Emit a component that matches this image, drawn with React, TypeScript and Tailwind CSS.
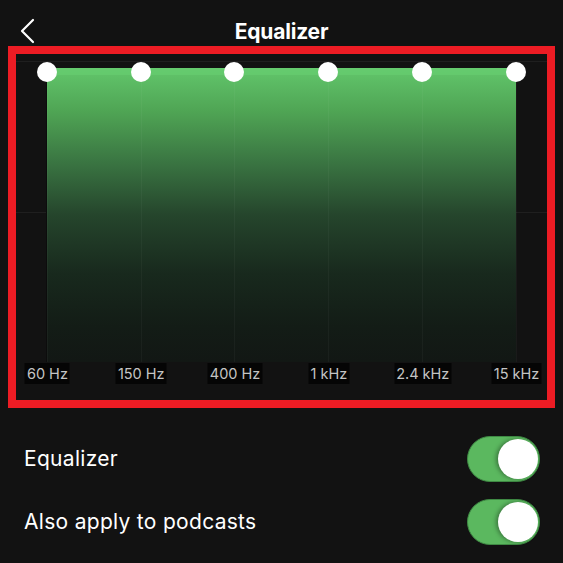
const bands = ["60 Hz", "150 Hz", "400 Hz", "1 kHz", "2.4 kHz", "15 kHz"];
const xs = [31, 125, 218, 312, 406, 500];

function Chart() {
  return (
    <svg width="531" height="308" viewBox="0 0 531 308" className="block">
      <defs>
        <linearGradient id="eqfill" x1="0" y1="0" x2="0" y2="1">
          <stop offset="0" stopColor="#62c66b" />
          <stop offset="0.15" stopColor="#4fa454" />
          <stop offset="0.32" stopColor="#3a7542" />
          <stop offset="0.5" stopColor="#25452c" />
          <stop offset="0.7" stopColor="#18291d" />
          <stop offset="0.88" stopColor="#131c16" />
          <stop offset="1" stopColor="#121714" />
        </linearGradient>
      </defs>
      <line x1="0" y1="7.5" x2="531" y2="7.5" stroke="#1f1f1f" strokeWidth="1" />
      <line x1="0" y1="158.5" x2="531" y2="158.5" stroke="#1f1f1f" strokeWidth="1" />
      <rect x={xs[0]} y="14" width={xs[5] - xs[0]} height="294" fill="url(#eqfill)" />
      <rect x={xs[0]} y="14" width={xs[5] - xs[0]} height="7" fill="#67cf71" opacity="0.6" />
      <line x1={xs[0] - 0.5} y1="14" x2={xs[0] - 0.5} y2="308" stroke="#0c0c0c" strokeWidth="1" />
      {xs.map((x) => (
        <line key={x} x1={x + 0.5} y1="7" x2={x + 0.5} y2="308" stroke="#ffffff" strokeOpacity="0.035" strokeWidth="1" />
      ))}
      {xs.map((x) => (
        <circle key={"c" + x} cx={x} cy="18" r="10" fill="#ffffff" />
      ))}
    </svg>
  );
}

function Toggle() {
  return (
    <div className="w-[73px] h-[46px] rounded-full bg-[#5bb85f] border border-[#3f8a44] flex items-center justify-end pr-[1px]">
      <div className="w-[40px] h-[40px] rounded-full bg-white shadow-[-2px_0_4px_rgba(0,0,0,0.35)]" />
    </div>
  );
}

export default function App() {
  return (
    <div className="w-[563px] h-[563px] bg-[#121212] overflow-hidden text-white" style={{ fontFamily: "Inter, 'Noto Sans', sans-serif" }}>
      <div className="relative h-[46px] flex items-center justify-center">
        <svg className="absolute left-[20px] top-[18px]" width="16" height="26" viewBox="0 0 16 26">
          <path d="M13 2 L2 13 L13 24" fill="none" stroke="#ffffff" strokeWidth="2.2" strokeLinecap="round" strokeLinejoin="round" />
        </svg>
        <h1 className="text-[21px] font-bold leading-none pt-[16px] tracking-[-0.2px]">Equalizer</h1>
      </div>

      <div className="mx-[8px] border-[8px] border-[#ed1c24] h-[362px] bg-[#121212]">
        <Chart />
        <div className="-ml-[16px] w-[563px] grid grid-cols-6 mt-[1px]">
          {bands.map((b) => (
            <div key={b} className="flex justify-center" style={{ transform: "translateX(0.5px)" }}>
              <span className="bg-[#050505] text-[#c4c4c4] text-[14.5px] leading-[21px] px-[2px]">{b}</span>
            </div>
          ))}
        </div>
      </div>

      <div className="flex flex-col gap-[17px] pt-[28px] pl-[24px] pr-[23px]">
        <div className="flex items-center justify-between h-[46px]">
          <span className="text-[21px] tracking-[0.3px]">Equalizer</span>
          <Toggle />
        </div>
        <div className="flex items-center justify-between h-[46px]">
          <span className="text-[21px] tracking-[0.3px]">Also apply to podcasts</span>
          <Toggle />
        </div>
      </div>
    </div>
  );
}
